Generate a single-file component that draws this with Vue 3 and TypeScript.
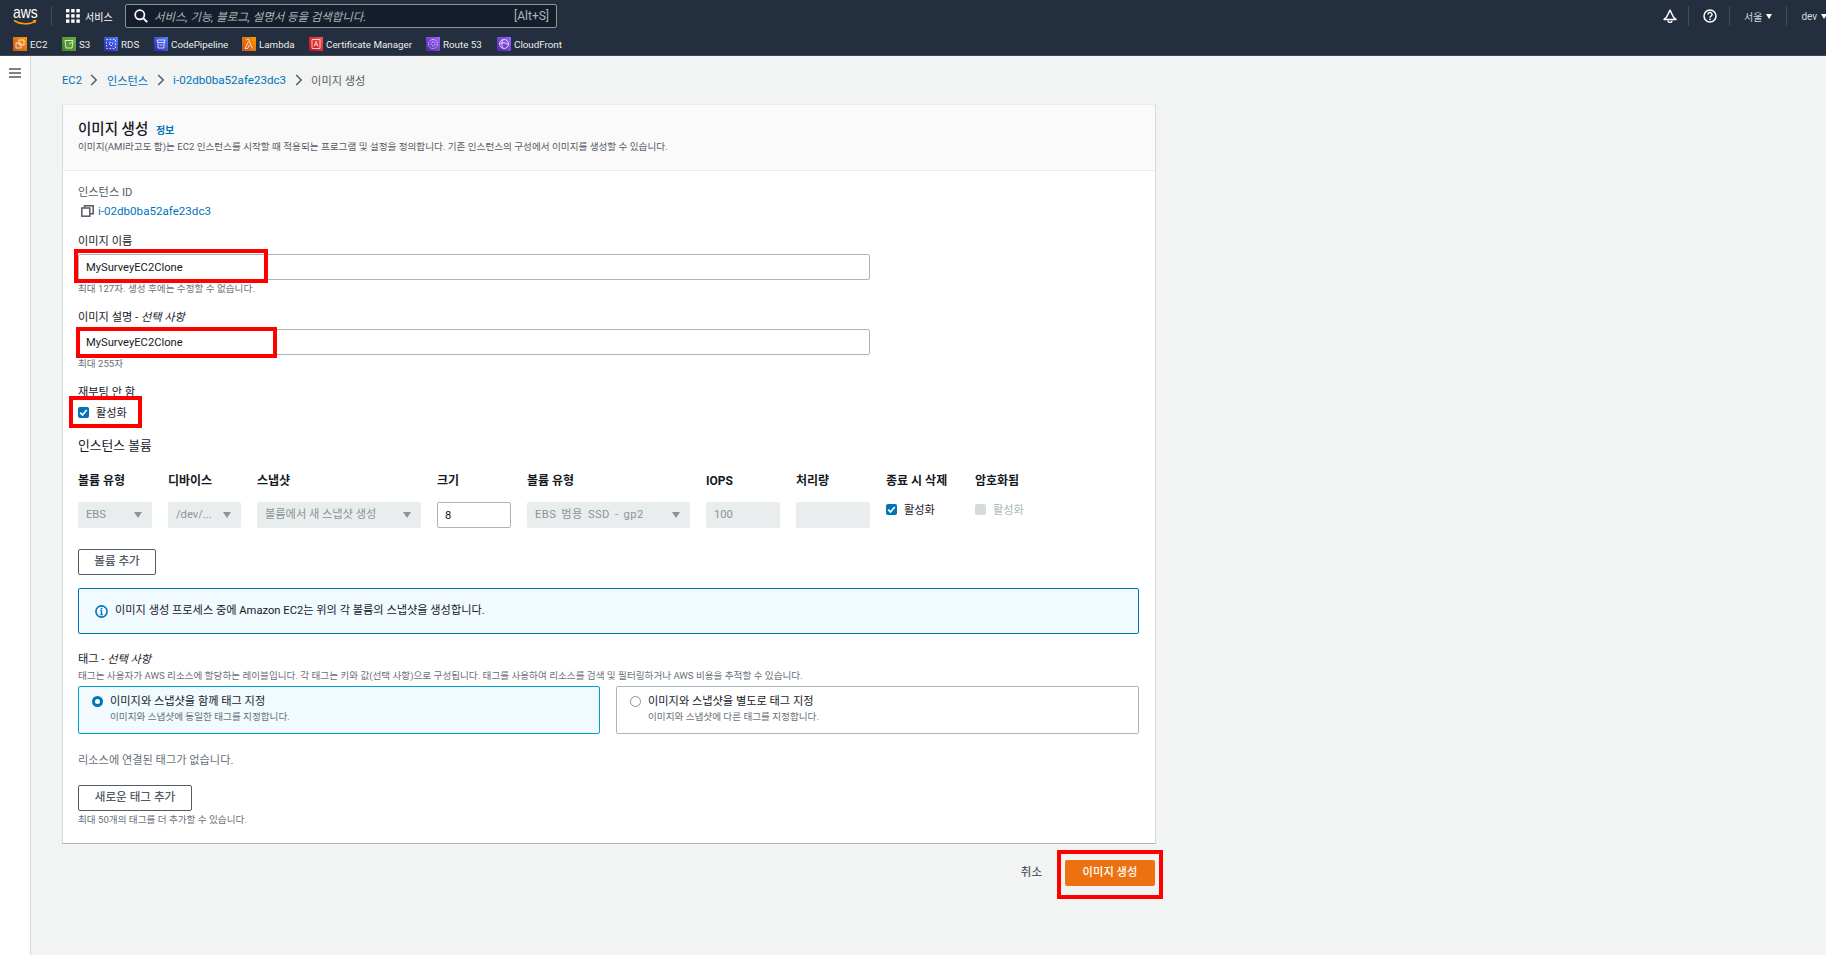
<template>
  <div class="page">
    <header class="topbar">
      <div class="nav-row">
        <div class="aws-logo">
          <span class="aws-word">aws</span>
          <svg class="aws-smile" width="25" height="7" viewBox="0 0 25 7">
            <path d="M1 1.5c6 4 15 4.5 21 1" fill="none" stroke="#ff9900" stroke-width="1.6" />
            <path d="M19.5 1.2l4-.4-1.2 3.8z" fill="#ff9900" />
          </svg>
        </div>
        <span class="nav-divider"></span>
        <svg class="grid-icon" width="14" height="14" viewBox="0 0 14 14">
          <rect v-for="d in gridDots" :key="d.k" :x="d.x" :y="d.y" width="3.4" height="3.4" fill="#fff" />
        </svg>
        <span class="nav-services">서비스</span>
        <div class="search">
          <svg width="14" height="14" viewBox="0 0 14 14" class="search-icon">
            <circle cx="5.8" cy="5.8" r="4.6" fill="none" stroke="#fff" stroke-width="1.7" />
            <path d="M9.2 9.2l4 4" stroke="#fff" stroke-width="1.9" />
          </svg>
          <span class="search-text">서비스, 기능, 블로그, 설명서 등을 검색합니다.</span>
          <span class="search-key">[Alt+S]</span>
        </div>
        <div class="nav-right">
          <svg width="14" height="14" viewBox="0 0 14 14" class="bell">
            <path d="M7 1.2L10.4 8l2.6 2.6H1L3.6 8z" fill="none" stroke="#fff" stroke-width="1.5" stroke-linejoin="round" />
            <path d="M5 11.5a2 2 0 0 0 4 0" fill="none" stroke="#fff" stroke-width="1.4" />
          </svg>
          <span class="nav-divider nd-1"></span>
          <svg width="14" height="14" viewBox="0 0 14 14" class="help">
            <circle cx="7" cy="7" r="6" fill="none" stroke="#fff" stroke-width="1.5" />
            <path d="M5 5.4a2 2 0 1 1 3 1.8c-.7.4-1 .8-1 1.6" fill="none" stroke="#fff" stroke-width="1.4" />
            <rect x="6.3" y="9.6" width="1.5" height="1.5" fill="#fff" />
          </svg>
          <span class="nav-divider nd-2"></span>
          <span class="nav-menu region">서울<i class="nav-caret"></i></span>
          <span class="nav-divider nd-3"></span>
          <span class="nav-menu user">dev<i class="nav-caret"></i></span>
        </div>
      </div>
      <div class="fav-row">
        <span v-for="b in bookmarks" :key="b.name" class="fav" :style="{ width: b.w + 'px' }">
          <svg class="fav-icon" width="14" height="14" viewBox="0 0 14 14">
            <defs>
              <linearGradient :id="'g-' + b.id" x1="0" y1="1" x2="1" y2="0">
                <stop offset="0" :stop-color="b.from" />
                <stop offset="1" :stop-color="b.to" />
              </linearGradient>
            </defs>
            <rect width="14" height="14" :fill="'url(#g-' + b.id + ')'" />
            <path :d="b.icon" fill="none" stroke="#fff" stroke-width="0.9" :stroke-dasharray="b.dash" opacity="0.85" />
          </svg>
          <span>{{ b.name }}</span>
        </span>
      </div>
    </header>

    <div class="shell">
      <aside class="sidebar">
        <svg width="12" height="10" viewBox="0 0 12 10" class="hamburger">
          <path d="M0 1h12M0 5h12M0 9h12" stroke="#545b64" stroke-width="1.6" />
        </svg>
      </aside>

      <main class="content">
        <nav class="crumbs">
          <a>EC2</a>
          <svg class="chev" width="8" height="12" viewBox="0 0 8 12"><path d="M1.2 1l5 5-5 5" fill="none" stroke="#545b64" stroke-width="1.5" /></svg>
          <a>인스턴스</a>
          <svg class="chev" width="8" height="12" viewBox="0 0 8 12"><path d="M1.2 1l5 5-5 5" fill="none" stroke="#545b64" stroke-width="1.5" /></svg>
          <a class="crumb-id">i-02db0ba52afe23dc3</a>
          <svg class="chev" width="8" height="12" viewBox="0 0 8 12"><path d="M1.2 1l5 5-5 5" fill="none" stroke="#545b64" stroke-width="1.5" /></svg>
          <span>이미지 생성</span>
        </nav>

        <section class="card">
          <div class="card-head">
            <h1>이미지 생성 <a class="info-link">정보</a></h1>
            <p>이미지(AMI라고도 함)는 EC2 인스턴스를 시작할 때 적용되는 프로그램 및 설정을 정의합니다. 기존 인스턴스의 구성에서 이미지를 생성할 수 있습니다.</p>
          </div>

          <div class="card-body">
            <div class="label muted">인스턴스 ID</div>
            <div class="id-row">
              <svg width="13" height="12" viewBox="0 0 13 12">
                <rect x="0.8" y="3" width="8" height="8.2" fill="#fff" stroke="#545b64" stroke-width="1.5" />
                <path d="M3.5 3V.8h8.7v8H9" fill="none" stroke="#545b64" stroke-width="1.5" />
              </svg>
              <a>i-02db0ba52afe23dc3</a>
            </div>

            <div class="label name-label">이미지 이름</div>
            <div class="input-wrap name-input">
              <div class="text-input">MySurveyEC2Clone</div>
              <span class="mark mark-name"></span>
            </div>
            <div class="hint hint-name">최대 127자. 생성 후에는 수정할 수 없습니다.</div>

            <div class="label desc-label">이미지 설명 - <em>선택 사항</em></div>
            <div class="input-wrap desc-input">
              <div class="text-input">MySurveyEC2Clone</div>
              <span class="mark mark-desc"></span>
            </div>
            <div class="hint hint-desc">최대 255자</div>

            <div class="label reboot-label">재부팅 안 함</div>
            <div class="check-row reboot">
              <span class="check on">
                <svg width="11" height="11" viewBox="0 0 11 11"><path d="M2.2 5.6l2.3 2.4 4.2-5" fill="none" stroke="#fff" stroke-width="1.7" /></svg>
              </span>
              <span>활성화</span>
              <span class="mark mark-reboot"></span>
            </div>

            <h2>인스턴스 볼륨</h2>

            <div class="vol-grid">
              <div v-for="h in volumeHeads" :key="h.key" class="vol-head">{{ h.text }}</div>

              <div class="select">EBS</div>
              <div class="select">/dev/...</div>
              <div class="select">볼륨에서 새 스냅샷 생성</div>
              <div class="text-input size-input">8</div>
              <div class="select wide-words">EBS 범용 SSD - gp2</div>
              <div class="plain-disabled">100</div>
              <div class="plain-disabled"></div>
              <div class="check-row vol-check">
                <span class="check on">
                  <svg width="11" height="11" viewBox="0 0 11 11"><path d="M2.2 5.6l2.3 2.4 4.2-5" fill="none" stroke="#fff" stroke-width="1.7" /></svg>
                </span>
                <span>활성화</span>
              </div>
              <div class="check-row vol-check off">
                <span class="check disabled"></span>
                <span>활성화</span>
              </div>
            </div>

            <button class="btn add-volume">볼륨 추가</button>

            <div class="alert">
              <svg width="13" height="13" viewBox="0 0 13 13">
                <circle cx="6.5" cy="6.5" r="5.6" fill="none" stroke="#0073bb" stroke-width="1.6" />
                <path d="M6.5 5.6v4M5.2 9.6h2.6M5.2 5.6h1.3" fill="none" stroke="#0073bb" stroke-width="1.3" />
                <rect x="5.7" y="2.9" width="1.6" height="1.6" fill="#0073bb" />
              </svg>
              <span>이미지 생성 프로세스 중에 Amazon EC2는 위의 각 볼륨의 스냅샷을 생성합니다.</span>
            </div>

            <div class="label tag-label">태그 - <em>선택 사항</em></div>
            <div class="hint tag-desc">태그는 사용자가 AWS 리소스에 할당하는 레이블입니다. 각 태그는 키와 값(선택 사항)으로 구성됩니다. 태그를 사용하여 리소스를 검색 및 필터링하거나 AWS 비용을 추적할 수 있습니다.</div>

            <div class="tiles">
              <div v-for="t in tagOptions" :key="t.title" class="tile" :class="{ active: t.active }">
                <span class="radio" :class="{ on: t.active }"></span>
                <div class="tile-text">
                  <div class="tile-title">{{ t.title }}</div>
                  <div class="tile-sub">{{ t.sub }}</div>
                </div>
              </div>
            </div>

            <div class="no-tags">리소스에 연결된 태그가 없습니다.</div>
            <button class="btn add-tag">새로운 태그 추가</button>
            <div class="hint tag-hint">최대 50개의 태그를 더 추가할 수 있습니다.</div>
          </div>
        </section>

        <div class="actions">
          <a class="cancel">취소</a>
          <div class="primary-wrap">
            <button class="btn-primary">이미지 생성</button>
            <span class="mark mark-primary"></span>
          </div>
        </div>
      </main>
    </div>
  </div>
</template>

<script setup lang="ts">
interface Bookmark {
  id: string;
  name: string;
  from: string;
  to: string;
  w: number;
  icon: string;
  dash?: string;
}

const gridDots: { k: string; x: number; y: number }[] = [];
for (let r = 0; r < 3; r++) {
  for (let c = 0; c < 3; c++) {
    gridDots.push({ k: `${r}-${c}`, x: c * 5.2, y: r * 5.2 });
  }
}

const bookmarks: Bookmark[] = [
  { id: 'ec2', name: 'EC2', from: '#c8511b', to: '#ff9900', w: 49, icon: 'M6 3h5v5H6zM3 6h5v5H3z' },
  { id: 's3', name: 'S3', from: '#3f8624', to: '#6cae3e', w: 42, icon: 'M3 3.5h8l-1 7.5H4zM7 7l3-1.5' },
  { id: 'rds', name: 'RDS', from: '#2e27ad', to: '#527fff', w: 50, icon: 'M2.5 2.5h9v9h-9zM5.5 5.5h3v3h-3z', dash: '1.6 1.6' },
  { id: 'cp', name: 'CodePipeline', from: '#2e27ad', to: '#527fff', w: 88, icon: 'M3 3h8l-.7 2.5H3.7zM4 5.5V11h6V5.5M5.5 8h3' },
  { id: 'lambda', name: 'Lambda', from: '#c8511b', to: '#ff9900', w: 67, icon: 'M4.5 2.5h2l4 9M6.3 5L3 11.5h2.5L7.5 8' },
  { id: 'acm', name: 'Certificate Manager', from: '#bd0816', to: '#ff5252', w: 117, icon: 'M3 2.5h8v9H3zM7 4.5L5 9.5M7 4.5l2 5M5.8 7.8h2.4' },
  { id: 'r53', name: 'Route 53', from: '#4d27a8', to: '#a166ff', w: 71, icon: 'M7 2.5a4.5 4.5 0 1 0 0 9 4.5 4.5 0 0 0 0-9zM7 5a2 2 0 1 0 0 4 2 2 0 0 0 0-4z', dash: '1.4 1' },
  { id: 'cf', name: 'CloudFront', from: '#4d27a8', to: '#a166ff', w: 70, icon: 'M7 2.5a4.5 4.5 0 1 0 0 9 4.5 4.5 0 0 0 0-9zM3 6.5c2-1 6-1 8 1M6 3c-1.5 2-1.5 6 0 8' },
];

const volumeHeads = [
  { key: 'type', text: '볼륨 유형' },
  { key: 'device', text: '디바이스' },
  { key: 'snap', text: '스냅샷' },
  { key: 'size', text: '크기' },
  { key: 'vtype', text: '볼륨 유형' },
  { key: 'iops', text: 'IOPS' },
  { key: 'tp', text: '처리량' },
  { key: 'del', text: '종료 시 삭제' },
  { key: 'enc', text: '암호화됨' },
];

const tagOptions = [
  { title: '이미지와 스냅샷을 함께 태그 지정', sub: '이미지와 스냅샷에 동일한 태그를 지정합니다.', active: true },
  { title: '이미지와 스냅샷을 별도로 태그 지정', sub: '이미지와 스냅샷에 다른 태그를 지정합니다.', active: false },
];
</script>

<style>
html,
body {
  margin: 0;
  height: 100%;
  overflow: hidden;
  background: #f2f3f3;
}
</style>

<style scoped>
.page {
  width: 1826px;
  height: 955px;
  overflow: hidden;
  font-family: Roboto, "Noto Sans CJK KR", sans-serif;
  font-size: 11.2px;
  color: #16191f;
  display: flex;
  flex-direction: column;
}

a {
  color: #0073bb;
}

.topbar {
  height: 56px;
  flex: none;
  background: #232f3e;
  border-bottom: 1px solid #3c4654;
  box-sizing: border-box;
  color: #fff;
}

.nav-row {
  height: 32px;
  display: flex;
  align-items: center;
  padding-left: 13px;
}

.aws-logo {
  position: relative;
  width: 25px;
  height: 22px;
  flex: none;
}

.aws-word {
  display: block;
  font-family: "Liberation Sans", sans-serif;
  font-size: 17px;
  line-height: 15px;
  transform: scaleX(0.82);
  transform-origin: left;
}

.aws-smile {
  position: absolute;
  left: 0;
  top: 14px;
}

.nav-divider {
  width: 1px;
  height: 20px;
  background: #414d5c;
  flex: none;
  margin-left: 13px;
}

.grid-icon {
  margin-left: 14px;
  flex: none;
}

.nav-services {
  margin-left: 5px;
  width: 40px;
  font-size: 10px;
}

.search {
  width: 432px;
  height: 24px;
  box-sizing: border-box;
  display: flex;
  align-items: center;
  background: #161e2d;
  border: 1px solid #879596;
  border-radius: 2px;
  padding: 0 7px 0 8px;
  color: #aab7b8;
  flex: none;
}

.search-icon {
  flex: none;
}

.search-text {
  margin-left: 6px;
  flex: 1;
  font-style: italic;
  font-size: 11.4px;
}

.search-key {
  font-size: 12px;
}

.nav-right {
  margin-left: auto;
  width: 163px;
  flex: none;
  display: flex;
  align-items: center;
}

.nav-right svg {
  flex: none;
}

.nav-right .nav-divider {
  margin: 0;
}

.nd-1 {
  margin-left: 11px !important;
}

.help {
  margin-left: 14px;
}

.nd-2 {
  margin-left: 12px !important;
}

.nav-menu {
  display: inline-flex;
  align-items: center;
  font-size: 10px;
  color: #d5dbdb;
  flex: none;
}

.region {
  margin-left: 14px;
}

.nd-3 {
  margin-left: 14px !important;
}

.user {
  margin-left: 14px;
}

.nav-caret {
  width: 0;
  height: 0;
  margin-left: 4px;
  border-left: 3.5px solid transparent;
  border-right: 3.5px solid transparent;
  border-top: 5px solid #fff;
}

.fav-row {
  height: 24px;
  display: flex;
  align-items: center;
  padding-left: 13px;
}

.fav {
  display: flex;
  align-items: center;
  gap: 3px;
  font-size: 9.8px;
  color: #eaeded;
  flex: none;
  white-space: nowrap;
}

.fav-icon {
  flex: none;
}

.shell {
  flex: 1;
  display: flex;
  min-height: 0;
}

.sidebar {
  width: 31px;
  flex: none;
  box-sizing: border-box;
  background: #fff;
  border-right: 1px solid #d5dbdb;
  padding: 12px 0 0 9px;
}

.hamburger {
  display: block;
}

.content {
  width: 1125px;
  padding: 0 0 0 31px;
  flex: none;
}

.crumbs {
  height: 48px;
  display: flex;
  align-items: center;
  color: #545b64;
  font-size: 11.2px;
}

.crumb-id {
  font-size: 11.6px;
}

.crumbs .chev {
  margin: 0 8.5px;
  flex: none;
}

.card {
  box-sizing: border-box;
  width: 1094px;
  background: #fff;
  border: 1px solid #d5dbdb;
  border-top-color: #eaeded;
  border-bottom-color: #aab7b8;
}

.card-head {
  background: #fafafa;
  border-bottom: 1px solid #eaeded;
  padding: 15px 15px 0;
  height: 66px;
  box-sizing: border-box;
}

.card-head h1 {
  margin: 0;
  font-size: 14.5px;
  line-height: 20px;
  font-weight: 500;
}

.info-link {
  font-size: 10px;
  font-weight: 700;
  margin-left: 4px;
}

.card-head p {
  margin: -1px 0 0;
  font-size: 9.6px;
  line-height: 14px;
  color: #545b64;
}

.card-body {
  padding: 14px 15px 16px;
}

.label {
  line-height: 16px;
}

.muted {
  color: #545b64;
}

.id-row {
  display: flex;
  align-items: center;
  gap: 4px;
  height: 16px;
  margin-top: 2px;
  padding-left: 3px;
  font-size: 11.6px;
}

.name-label {
  margin-top: 15px;
}

.input-wrap {
  position: relative;
  width: 792px;
}

.name-input {
  margin-top: 4px;
}

.text-input {
  box-sizing: border-box;
  height: 26px;
  background: #fff;
  border: 1px solid #aab7b8;
  border-radius: 2px;
  padding: 0 7px;
  line-height: 25px;
}

.hint {
  font-size: 9.6px;
  line-height: 14px;
  color: #687078;
}

.hint-name {
  margin-top: 2px;
}

.desc-label {
  margin-top: 14px;
}

.desc-input {
  margin-top: 3px;
}

.hint-desc {
  margin-top: 2px;
}

.reboot-label {
  margin-top: 14px;
}

em {
  font-style: italic;
}

.check-row {
  display: flex;
  align-items: center;
  gap: 7px;
  height: 16px;
  position: relative;
}

.reboot {
  width: fit-content;
  margin-top: 3px;
}

.check {
  width: 11px;
  height: 11px;
  border-radius: 2px;
  display: block;
  flex: none;
}

.check svg {
  display: block;
}

.check.on {
  background: #0073bb;
}

.check.disabled {
  background: #d5dbdb;
}

h2 {
  margin: 16px 0 0;
  font-size: 12.8px;
  line-height: 20px;
  font-weight: 400;
}

.vol-grid {
  margin-top: 17px;
  display: grid;
  grid-template-columns: 74px 73px 164px 74px 163px 74px 74px 73px 100px;
  gap: 13px 16px;
}

.vol-head {
  font-size: 12px;
  line-height: 16px;
  font-weight: 700;
}

.select,
.plain-disabled {
  position: relative;
  box-sizing: border-box;
  height: 26px;
  background: #eaeded;
  border-radius: 2px;
  padding: 0 8px;
  line-height: 25px;
  color: #879596;
  white-space: nowrap;
  overflow: hidden;
}

.select::after {
  content: '';
  position: absolute;
  right: 10px;
  top: 10px;
  border-left: 4px solid transparent;
  border-right: 4px solid transparent;
  border-top: 6px solid #879596;
}

.wide-words {
  word-spacing: 2px;
  letter-spacing: 0.4px;
}

.size-input {
  color: #16191f;
}

.vol-check {
  height: 16px;
  margin-top: -1px;
}

.vol-check.off {
  color: #aab7b8;
}

.btn {
  display: block;
  box-sizing: border-box;
  height: 26px;
  background: #fff;
  border: 1px solid #545b64;
  border-radius: 2px;
  font-family: inherit;
  font-size: 11.6px;
  font-weight: 500;
  color: #545b64;
  padding: 0 0 4px;
}

.add-volume {
  width: 78px;
  margin-top: 21px;
}

.alert {
  box-sizing: border-box;
  height: 46px;
  margin-top: 13px;
  width: 1061px;
  display: flex;
  align-items: center;
  gap: 7px;
  padding-left: 16px;
  background: #f1faff;
  border: 1px solid #0073bb;
  border-radius: 2px;
}

.alert span {
  margin-bottom: 5px;
}

.tag-label {
  margin-top: 18px;
}

.tag-desc {
  margin-top: 1px;
}

.tiles {
  margin-top: 3px;
  display: grid;
  grid-template-columns: 522px 523px;
  gap: 16px;
}

.tile {
  box-sizing: border-box;
  height: 48px;
  display: flex;
  gap: 7px;
  padding: 7px 13px;
  border: 1px solid #aab7b8;
  border-radius: 2px;
  background: #fff;
}

.tile.active {
  background: #f1faff;
  border-color: #00a1c9;
}

.radio {
  box-sizing: border-box;
  width: 11px;
  height: 11px;
  margin-top: 2px;
  border: 1px solid #879596;
  border-radius: 50%;
  background: #fff;
  flex: none;
}

.radio.on {
  border: 3px solid #0073bb;
}

.tile-title {
  line-height: 16px;
}

.tile-sub {
  font-size: 9.6px;
  line-height: 14px;
  color: #687078;
}

.no-tags {
  margin-top: 19px;
  line-height: 16px;
  color: #687078;
}

.add-tag {
  width: 114px;
  margin-top: 16px;
}

.tag-hint {
  margin-top: 2px;
}

.actions {
  width: 1093px;
  margin-top: 16px;
  display: flex;
  justify-content: flex-end;
  align-items: center;
  gap: 23px;
}

.cancel {
  color: #545b64;
  font-weight: 500;
  font-size: 11.5px;
  margin-bottom: 5px;
}

.primary-wrap {
  position: relative;
}

.btn-primary {
  display: block;
  width: 90px;
  height: 26px;
  background: #ec7211;
  border: 0;
  border-radius: 2px;
  font-family: inherit;
  font-size: 11.3px;
  font-weight: 500;
  color: #fff;
  padding: 0 0 5px;
}

/* red annotation boxes from the original screenshot */
.mark {
  position: absolute;
  box-sizing: border-box;
  border: 4px solid #ff0000;
  pointer-events: none;
}

.mark-name {
  left: -4px;
  top: -5px;
  width: 194px;
  height: 34px;
}

.mark-desc {
  left: -2px;
  top: -2px;
  width: 201px;
  height: 31px;
}

.mark-reboot {
  left: -9px;
  top: -8px;
  width: 73px;
  height: 32px;
}

.mark-primary {
  left: -8px;
  top: -10px;
  width: 106px;
  height: 49px;
}
</style>
